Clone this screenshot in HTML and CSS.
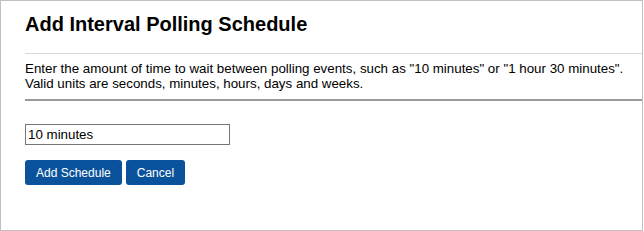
FILE: index.html
```html
<!DOCTYPE html>
<html>
<head>
<meta charset="utf-8">
<link rel="stylesheet" href="styles.css">
</head>
<body>
<div class="frame">
  <h1 class="title">Add Interval Polling Schedule</h1>
  <div class="desc">
    <p>Enter the amount of time to wait between polling events, such as "10 minutes" or "1 hour 30 minutes".<br>Valid units are seconds, minutes, hours, days and weeks.</p>
  </div>
  <div class="form">
    <input class="field" type="text" value="10 minutes">
    <div class="actions">
      <button class="btn">Add Schedule</button>
      <button class="btn">Cancel</button>
    </div>
  </div>
</div>
</body>
</html>
```

FILE: styles.css
```css
html, body {
  margin: 0;
  padding: 0;
  background: #fff;
}
.frame {
  box-sizing: border-box;
  width: 643px;
  height: 231px;
  border: 1px solid #c0c0c0;
  padding-left: 24px;
  font-family: "Liberation Sans", Arial, sans-serif;
  color: #000;
}
.title {
  margin: 12px 0 0 0;
  font-size: 20px;
  font-weight: bold;
  line-height: 23px;
  height: 40px;
  border-bottom: 1px solid #d9d9d9;
  box-sizing: content-box;
}
.desc {
  border-bottom: 2px solid #9a9a9a;
  padding: 7px 0 8px 0;
}
.desc p {
  margin: 0;
  font-size: 13.33px;
  line-height: 15px;
}
.form {
  padding-top: 23px;
}
.field {
  display: block;
  box-sizing: border-box;
  width: 205px;
  height: 21px;
  margin: 0;
  padding: 0 2px;
  border: 1px solid #767676;
  font-family: "Liberation Sans", Arial, sans-serif;
  font-size: 13.33px;
  color: #000;
}
.actions {
  display: flex;
  gap: 4px;
  margin-top: 15px;
}
.btn {
  height: 25px;
  margin: 0;
  padding: 0 11px;
  border: none;
  border-radius: 3px;
  background: #0a539c;
  color: #fff;
  font-family: "Liberation Sans", Arial, sans-serif;
  font-size: 12px;
}
```
